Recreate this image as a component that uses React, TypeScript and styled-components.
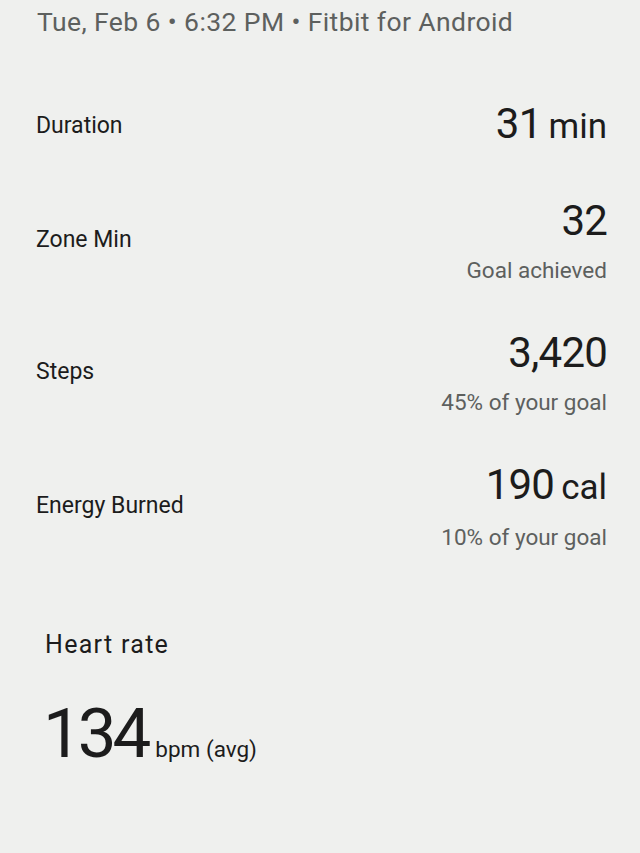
import React from 'react'
import styled, { createGlobalStyle } from 'styled-components'

const GlobalStyle = createGlobalStyle`
  html, body {
    margin: 0;
    padding: 0;
    background: #eff0ee;
  }
  body {
    font-family: Roboto, 'Liberation Sans', sans-serif;
    -webkit-font-smoothing: antialiased;
  }
`

type Stat = {
  label: string
  value: string
  unit?: string
  note?: string
}

const stats: Stat[] = [
  { label: 'Duration', value: '31', unit: 'min' },
  { label: 'Zone Min', value: '32', note: 'Goal achieved' },
  { label: 'Steps', value: '3,420', note: '45% of your goal' },
  { label: 'Energy Burned', value: '190', unit: 'cal', note: '10% of your goal' },
]

const App = () => {
  return <Page>
    <GlobalStyle />
    <Header>Tue, Feb 6 • 6:32 PM • Fitbit for Android</Header>

    <StatList>
      {stats.map((s) => (
        <StatRow key={s.label}>
          <StatLabel>{s.label}</StatLabel>
          <StatBlock>
            <StatValue>
              {s.value}
              {s.unit && <StatUnit>{s.unit}</StatUnit>}
            </StatValue>
            {s.note && <StatNote>{s.note}</StatNote>}
          </StatBlock>
        </StatRow>
      ))}
    </StatList>

    <HeartSection>
      <HeartTitle>Heart rate</HeartTitle>
      <HeartValueRow>
        <HeartValue>134</HeartValue>
        <HeartUnit>bpm (avg)</HeartUnit>
      </HeartValueRow>
    </HeartSection>
  </Page>
}

export default App

const Page = styled.div`
  width: 640px;
  min-height: 853px;
  box-sizing: border-box;
  padding: 4px 33px 0 36px;
  background: #eff0ee;
  color: #1c1c1c;
`

const Header = styled.div`
  font-size: 26.5px;
  line-height: 36px;
  letter-spacing: 0.4px;
  color: #5d605e;
  white-space: nowrap;
  padding-left: 1px;
`

const StatList = styled.div`
  display: flex;
  flex-direction: column;
  gap: 46px;
  margin-top: 60px;
`

const StatRow = styled.div`
  display: flex;
  align-items: center;
  justify-content: space-between;
`

const StatLabel = styled.div`
  font-size: 23px;
  line-height: 32px;
  color: #1c1c1c;
`

const StatBlock = styled.div`
  display: flex;
  flex-direction: column;
  align-items: flex-end;
`

const StatValue = styled.div`
  font-size: 42px;
  line-height: 48px;
  letter-spacing: -0.8px;
  color: #1c1c1c;
  white-space: nowrap;
`

const StatUnit = styled.span`
  font-size: 35px;
  letter-spacing: 0;
  margin-left: 7px;
`

const StatNote = styled.div`
  margin-top: 13px;
  font-size: 22.5px;
  line-height: 25px;
  color: #5d605e;
`

const HeartSection = styled.div`
  display: flex;
  flex-direction: column;
  margin-top: 79px;
  padding-left: 9px;
`

const HeartTitle = styled.div`
  font-size: 25px;
  line-height: 32px;
  letter-spacing: 1.3px;
  color: #1c1c1c;
`

const HeartValueRow = styled.div`
  display: flex;
  align-items: baseline;
  margin-top: 38px;
  margin-left: -2px;
`

const HeartValue = styled.span`
  font-size: 69px;
  line-height: 69px;
  letter-spacing: -4px;
  color: #1c1c1c;
`

const HeartUnit = styled.span`
  font-size: 22.5px;
  margin-left: 8px;
  color: #1c1c1c;
`
